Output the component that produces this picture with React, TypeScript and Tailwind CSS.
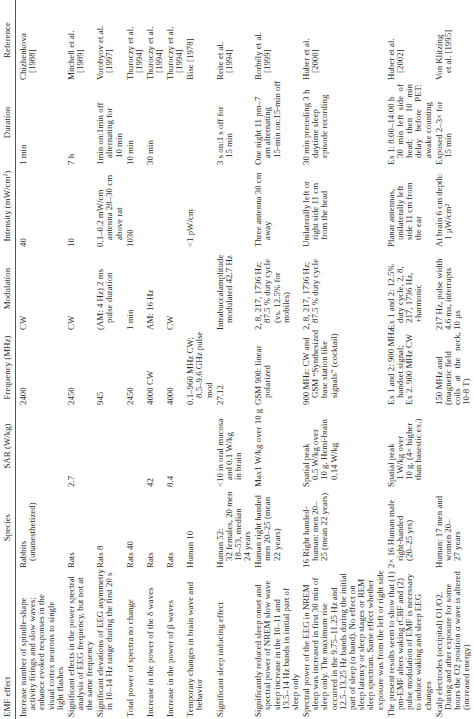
import React from "react";

// each row: 8 cells, each cell a list of printed lines.
// "~" at the start: printed flush (no hanging indent)
// "=" at the start: line is set justified to the column edge
type Cell = string[];
type Row = Cell[];

const COL_CLASSES = [
  "pl-[2px] pr-[3px]",
  "pr-[2px]",
  "pr-[2px]",
  "pr-[2px]",
  "pr-[2px]",
  "pr-[2px]",
  "pr-[4px]",
  "pr-[3px]",
];

const HEADERS = [
  "EMF effect",
  "Species",
  "SAR (W/kg)",
  "Frequency (MHz)",
  "Modulation",
  "Intensity",
  "Duration",
  "Reference",
];

const ROWS: Row[] = [
  [
    ["Increase number of spindle-shape", "activity firings and slow waves;", "enhance evoked responses in the", "visual cortex neurons to single", "light flashes"],
    ["Rabbits", "(unanesthetized)"],
    [],
    ["2400"],
    ["CW"],
    ["40"],
    ["1 min"],
    ["Chizhenkova", "[1988]"],
  ],
  [
    ["Significant effects in the power spectral", "analysis of EEG frequency, but not at", "the same frequency"],
    ["Rats"],
    ["2.7"],
    ["2450"],
    ["CW"],
    ["10"],
    ["7 h"],
    ["Mitchell et al.", "[1989]"],
  ],
  [
    ["Significant elevations of EEG asymmetry", "in 10–14 Hz range during the first 20 s"],
    ["Rats 8"],
    [],
    ["945"],
    ["(AM: 4 Hz) 2 ms", "pulse duration"],
    ["0.1–0.2 mW/cm", "antenna 28–30 cm", "above rat"],
    ["1min on:1min off", "alternating for", "10 min"],
    ["Vorobyov et al.", "[1997]"],
  ],
  [
    ["Total power of spectra no change"],
    ["Rats 40"],
    [],
    ["2450"],
    ["1 min"],
    ["1030"],
    ["10 min"],
    ["Thuroczy et al.", "[1994]"],
  ],
  [
    ["Increase in the power of the δ waves"],
    ["Rats"],
    ["42"],
    ["4000 CW"],
    ["AM: 16 Hz"],
    [],
    ["30 min"],
    ["Thuroczy et al.", "[1994]"],
  ],
  [
    ["Increase in the power of β waves"],
    ["Rats"],
    ["8.4"],
    ["4000"],
    ["CW"],
    [],
    [],
    ["Thuroczy et al.", "[1994]"],
  ],
  [
    ["Temporary changes in brain wave and", "behavior"],
    ["Human 10"],
    [],
    ["0.1–960 MHz CW;", "8.5–9.6 GHz pulse", "mod"],
    [],
    ["<1 pW/cm"],
    [],
    ["Bise [1978]"],
  ],
  [
    ["Significant sleep inducing effect"],
    ["Human 52:", "32 females, 20 men", "18–53, median", "24 years"],
    ["<10 in oral mucosa", "and 0.1 W/kg", "in brain"],
    ["27.12"],
    ["Intrabuccalamplitude", "modulated 42.7 Hz"],
    [],
    ["3 s on:1 s off for", "15 min"],
    ["Reite et al.", "[1994]"],
  ],
  [
    ["Significantly reduced sleep onset and", "spectral power of NREM slow wave", "sleep increase in the 10–11 and", "13.5–14 Hz bands in initial part of", "sleep only"],
    ["Human right handed", "men 20–25 (mean", "22 years)"],
    ["Max1 W/kg over 10 g"],
    ["GSM 900: linear", "polarized"],
    ["2, 8, 217, 1736 Hz;", "87.5 % duty cycle", "(vs. 12.5% for", "mobiles)"],
    ["Three antenna 30 cm", "away"],
    ["One night 11 pm–7", "am alternating", "15-min on:15-min off"],
    ["Borbély et al.", "[1999]"],
  ],
  [
    ["Spectral power of the EEG in NREM", "sleep was increased in first 30 min of", "sleep only. The maximum rise", "occurred in the 9.75–11.25 Hz and", "12.5–13.25 Hz bands during the initial", "part of sleep (α band). No effect on", "sleep latency or sleep stages or REM", "sleep spectrum. Same effect whether", "exposure was from the left or right side"],
    ["16 Right handed-", "human: men 20–", "25 (mean 22 years)"],
    ["Spatial peak", "0.5 W/kg over", "10 g. Hemi-brain", "0.14 W/kg"],
    ["900 MHz: CW and", "GSM “Synthesized", "base station like", "signals” (cocktail)"],
    ["2, 8, 217, 1736 Hz;", "87.5 % duty cycle"],
    ["Unilaterally left or", "right side 11 cm", "from the head"],
    ["30 min preceding 3 h", "daytime sleep", "episode recording"],
    ["Huber et al.", "[2000]"],
  ],
  [
    ["The present results seem to show that (1)", "pm-EMF alters waking rCBF and (2)", "pulse modulation of EMF is necessary", "to induce waking and sleep EEG", "changes"],
    ["2× 16 Human male", "right-handed", "(20–25 yrs)"],
    ["Spatial peak", "1 W/kg over", "10 g. (4× higher", "than basestic ex.)"],
    ["Ex 1 and 2: 900 MHz", "handset signal;", "~Ex 2. 900 MHz CW"],
    ["Ex 1 and 2: 12.5%", "duty cycle, 2, 8,", "217, 1736 Hz,", "+harmonic"],
    ["Planar antennas,", "unilaterally left", "side 11 cm from", "the ear"],
    ["Ex 1: 8:00–14:00 h", "=30 min left side of", "=head; then 10 min", "=delay before PET:", "awake counting"],
    ["Huber et al.", "[2002]"],
  ],
  [
    ["Scalp electrodes (occipital) O1/O2.", "During and after exposure for some", "hours the O2 position α wave is altered", "(increased energy)"],
    ["Human: 17 men and", "women 20–", "27 years"],
    [],
    ["150 MHz and", "~(magnetic field", "~=coils at the neck,", "~10-8 T)"],
    ["217 Hz, pulse width", "~4.6 ms, interrupts", "~10 µs"],
    ["At brain 6 cm depth:", "1 µW/cm²"],
    ["Exposed 2–3× for", "15 min"],
    ["Von Klitzing", "et al. [1995]"],
  ],
];

function CellLines({ lines }: { lines: Cell }) {
  return (
    <>
      {lines.map((l, i) => {
        let text = l;
        let flush = false;
        let just = false;
        if (text.startsWith("~")) {
          flush = true;
          text = text.slice(1);
        }
        if (text.startsWith("=")) {
          just = true;
          text = text.slice(1);
        }
        const indent = i > 0 && !flush ? "pl-[7px]" : "";
        const align = just ? "text-justify [text-align-last:justify]" : "text-left";
        return (
          <div key={i} className={`${indent} ${align} whitespace-nowrap`}>
            {text}
          </div>
        );
      })}
    </>
  );
}

export default function App() {
  return (
    <div className="w-[474px] h-[719px] overflow-hidden bg-white">
      <div className="w-[719px] h-[474px] origin-top-left -rotate-90 translate-y-[719px] bg-white text-[#2b2b2b] font-['Liberation_Serif',serif] text-[8.9px] leading-[9.2px]">
        <div className="grid grid-cols-[151px_81px_82px_75px_83px_82px_85px_80px] h-[16px] items-center border-b border-[#555]">
          {HEADERS.map((h, i) => (
            <div key={i} className={i === 0 ? "pl-[2px]" : "text-center"}>
              {h}
              {i === 5 && (
                <>
                  {" (mW/cm"}
                  <sup className="text-[6px]">2</sup>
                  {")"}
                </>
              )}
            </div>
          ))}
        </div>
        <div className="pt-[3px]">
          {ROWS.map((row, r) => (
            <div key={r} className="grid grid-cols-[151px_81px_82px_75px_83px_82px_85px_80px] pb-[1.8px]">
              {row.map((cell, c) => (
                <div key={c} className={COL_CLASSES[c]}>
                  <CellLines lines={cell} />
                </div>
              ))}
            </div>
          ))}
        </div>
      </div>
    </div>
  );
}
